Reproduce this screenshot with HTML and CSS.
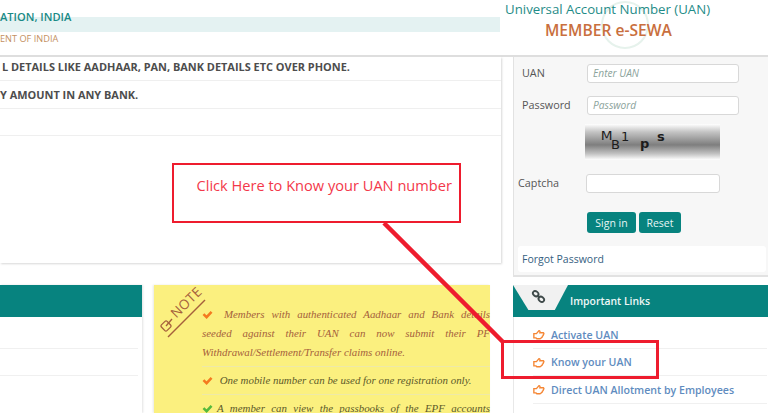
FILE: index.html
```html
<!DOCTYPE html>
<html lang="en">
<head>
<meta charset="utf-8">
<title>UAN Member e-Sewa</title>
<link rel="stylesheet" href="styles.css">
</head>
<body>
<div class="page">
  <header class="top">
    <div class="org">
      <div class="org-name"><span>ATION, INDIA</span></div>
      <div class="org-sub">ENT OF INDIA</div>
    </div>
    <div class="brand">
      <svg class="ring" viewBox="0 0 50 50" width="50" height="50" aria-hidden="true"><circle cx="25" cy="25" r="23" fill="none" stroke="#e6f2ec" stroke-width="2"/></svg>
      <div class="brand-a">Universal Account Number (UAN)</div>
      <div class="brand-b">MEMBER e-SEWA</div>
    </div>
  </header>

  <main class="upper">
    <section class="alerts">
      <div class="alert a1">L DETAILS LIKE AADHAAR, PAN, BANK DETAILS ETC OVER PHONE.</div>
      <div class="alert a2">Y AMOUNT IN ANY BANK.</div>
      <div class="alert a3"></div>
    </section>

    <aside class="login">
      <div class="field f-uan">
        <label class="lbl">UAN</label>
        <div class="inp ph">Enter UAN</div>
      </div>
      <div class="field f-pass">
        <label class="lbl">Password</label>
        <div class="inp ph">Password</div>
      </div>
      <div class="captcha"><span class="c1">M</span><span class="c2">B</span><span class="c3">1</span><span class="c4">p</span><span class="c5">s</span></div>
      <div class="field f-cap">
        <label class="lbl lbl-cap">Captcha</label>
        <div class="inp inp-cap"></div>
      </div>
      <div class="btns">
        <div class="btn b-sign">Sign in</div>
        <div class="btn b-reset">Reset</div>
      </div>
      <div class="forgot">Forgot Password</div>
    </aside>
  </main>

  <div class="lower">
    <section class="col-left">
      <div class="teal-head"></div>
      <div class="plain-row"></div>
      <div class="plain-row"></div>
    </section>

    <section class="note">
      <div class="note-tag">
        <svg class="note-svg" viewBox="0 0 54 54" width="54" height="54" aria-hidden="true">
          <path d="M14 52 L51 15" stroke="#a5603c" stroke-width="1.4" fill="none"/>
          <g fill="none" stroke="#a5603c" stroke-width="1.3">
            <rect x="-4" y="-4" width="8" height="8" rx="1.5" transform="translate(12 41) rotate(-44)"/>
            <path d="M12 41 L18 34"/>
          </g>
        </svg>
        <span class="note-word">NOTE</span>
      </div>
      <div class="note-body">
        <p class="n1"><svg class="chk" viewBox="0 0 12 10" width="11" height="9" aria-hidden="true"><path d="M1.5 4.5 L5 8 L10.5 2" fill="none" stroke="#f47a20" stroke-width="2.8"/></svg> Members with authenticated Aadhaar and Bank details seeded against their UAN can now submit their PF Withdrawal/Settlement/Transfer claims online.</p>
        <p class="n2"><svg class="chk" viewBox="0 0 12 10" width="11" height="9" aria-hidden="true"><path d="M1.5 4.5 L5 8 L10.5 2" fill="none" stroke="#f47a20" stroke-width="2.8"/></svg> One mobile number can be used for one registration only.</p>
        <p class="n3"><svg class="chk" viewBox="0 0 12 10" width="11" height="9" aria-hidden="true"><path d="M1.5 4.5 L5 8 L10.5 2" fill="none" stroke="#55b93c" stroke-width="2.8"/></svg>A member can view the passbooks of the EPF accounts</p>
      </div>
    </section>

    <section class="links">
      <div class="links-head">
        <div class="links-tab">
          <svg viewBox="0 0 16 16" width="15" height="15" aria-hidden="true">
            <g fill="none" stroke="#3f4a4a" stroke-width="2">
              <ellipse cx="5" cy="5" rx="3.2" ry="2.5" transform="rotate(40 5 5)"/>
              <ellipse cx="11" cy="11" rx="3.2" ry="2.5" transform="rotate(40 11 11)"/>
              <path d="M6.5 6.5 L9.5 9.5"/>
            </g>
          </svg>
        </div>
        <span class="links-title">Important Links</span>
      </div>
      <ul class="link-list">
        <li><svg class="hand" viewBox="0 0 14 12" width="12" height="11" aria-hidden="true"><path d="M1 5 H4 L7 1.5 Q8.6 1.5 8 4 H12.2 Q13.4 5 12 6.2 Q12.4 7.6 11 8 Q11 9.6 9.6 9.8 Q9.4 11 8 11 H4.5 L3.5 10 H1 Z" fill="none" stroke="#f58634" stroke-width="1.6"/></svg>Activate UAN</li>
        <li><svg class="hand" viewBox="0 0 14 12" width="12" height="11" aria-hidden="true"><path d="M1 5 H4 L7 1.5 Q8.6 1.5 8 4 H12.2 Q13.4 5 12 6.2 Q12.4 7.6 11 8 Q11 9.6 9.6 9.8 Q9.4 11 8 11 H4.5 L3.5 10 H1 Z" fill="none" stroke="#f58634" stroke-width="1.6"/></svg>Know your UAN</li>
        <li><svg class="hand" viewBox="0 0 14 12" width="12" height="11" aria-hidden="true"><path d="M1 5 H4 L7 1.5 Q8.6 1.5 8 4 H12.2 Q13.4 5 12 6.2 Q12.4 7.6 11 8 Q11 9.6 9.6 9.8 Q9.4 11 8 11 H4.5 L3.5 10 H1 Z" fill="none" stroke="#f58634" stroke-width="1.6"/></svg>Direct UAN Allotment by Employees</li>
      </ul>
    </section>
  </div>

  <svg class="arrow" viewBox="0 0 768 413" width="768" height="413" aria-hidden="true">
    <path d="M384 223 L503 342" stroke="#ee1c2e" stroke-width="4.5" fill="none"/>
  </svg>
  <div class="callout">Click Here to Know your UAN number</div>
  <div class="highlight"></div>
</div>
</body>
</html>
```
FILE: styles.css
```css
* { box-sizing: border-box; }
html, body { margin: 0; padding: 0; background: #fff; }
.page {
  position: relative;
  width: 768px;
  height: 413px;
  overflow: hidden;
  background: #fff;
  font-family: "Open Sans", "Noto Sans", sans-serif;
  color: #444;
}

/* header */
.top {
  display: flex;
  height: 57px;
  border-bottom: 2px solid #dedede;
}
.org { width: 500px; padding-top: 17px; }
.org-name {
  height: 15px;
  background: #e4f2f2;
  white-space: nowrap;
  font-size: 11.1px;
  font-weight: 600;
  line-height: 1;
  color: #1a8a86;
}
.org-name span { position: relative; top: -6px; }
.org-sub {
  margin-top: -1px;
  white-space: nowrap;
  font-size: 9.2px;
  line-height: 16px;
  color: #c4905f;
}
.brand { position: relative; flex: 1; padding: 0 0 0 5px; }
.ring { position: absolute; left: 100px; top: 0; }
.brand-a {
  position: relative;
  font-size: 13.25px;
  font-weight: 500;
  line-height: 18px;
  color: #1f8c88;
  white-space: nowrap;
}
.brand-b {
  position: relative;
  margin: 1px 0 0 40px;
  font-size: 15.6px;
  line-height: 22px;
  font-weight: 600;
  color: #c96f3e;
  white-space: nowrap;
}

/* upper */
.upper { display: flex; gap: 12px; height: 220px; }
.alerts {
  width: 501px;
  height: 206px;
  background: #fff;
  box-shadow: 1px 1px 2px #d8d8d8;
}
.alert {
  white-space: nowrap;
  font-size: 10.95px;
  font-weight: 700;
  color: #4d4d4d;
  border-bottom: 1px solid #efefef;
}
.a1 { height: 24px; line-height: 19px; padding-left: 2px; }
.a2 { height: 28px; line-height: 27px; }
.a3 { height: 27px; }

.login {
  width: 255px;
  background: #f7f7f7;
  border-left: 1px solid #e2e2e2;
  border-bottom: 2px solid #e2e2e2;
  padding: 7px 3px 0 4px;
}
.field { display: flex; align-items: center; height: 19px; }
.f-pass { margin-top: 13px; }
.f-cap { margin-top: 14px; }
.lbl { width: 69px; padding: 0 0 2px 4px; font-size: 10.8px; color: #555; }
.lbl-cap { padding-left: 0; width: 68px; }
.inp {
  width: 152px;
  height: 19px;
  background: #fff;
  border: 1px solid #d8d8d8;
  border-radius: 3px;
  padding-left: 5px;
  font-size: 10.2px;
  line-height: 17px;
}
.inp-cap { width: 134px; }
.ph { font-style: italic; color: #8ba39b; }
.captcha {
  position: relative;
  width: 135px;
  height: 36px;
  margin: 9px 0 0 67px;
  background: linear-gradient(#fff 0%, #c4c4c4 22%, #7e7e7e 58%, #c0c0c0 82%, #fff 100%);
  font-family: "DejaVu Sans", sans-serif;
  color: #1c1c1c;
  line-height: 1;
}
.captcha span { position: absolute; font-size: 13px; }
.c1 { left: 16px; top: 5px; transform: scaleX(1.05); }
.c2 { left: 26px; top: 14px; }
.c3 { left: 36px; top: 6px; font-size: 14px; }
.c4 { left: 55px; top: 13px; font-weight: 700; }
.c5 { left: 72px; top: 6px; font-weight: 700; }
.btns { display: flex; gap: 3px; margin: 19px 0 0 69px; }
.btn {
  height: 21px;
  background: #07837f;
  border-radius: 3px;
  color: #e6f5f4;
  font-size: 10.5px;
  line-height: 23px;
  text-align: center;
}
.b-sign { width: 49px; }
.b-reset { width: 42px; }
.forgot {
  height: 26px;
  margin: 13px -1px 0 0;
  background: #fff;
  border-radius: 3px;
  padding-left: 4px;
  font-size: 10.5px;
  line-height: 27px;
  color: #35607f;
}

/* lower */
.lower { display: flex; margin-top: 8px; }
.col-left {
  width: 142px;
  margin-right: 12px;
  height: 128px;
  box-shadow: 1px 0 2px #e2e2e2;
}
.teal-head { height: 32px; background: #07837f; }
.plain-row { height: 27px; margin-right: 4px; border-bottom: 1px solid #f0f0f0; }
.plain-row:nth-child(2) { height: 32px; }

.note {
  position: relative;
  width: 336px;
  height: 128px;
  margin-right: 23px;
  background: #fbf07f;
  box-shadow: -1px 0 2px #e8e8e0;
  padding: 20px 0 0 48px;
}
.note-tag { position: absolute; left: 0; top: 0; width: 54px; height: 54px; }
.note-svg { position: absolute; left: 0; top: 0; }
.note-word {
  position: absolute;
  left: 14px;
  top: 11px;
  transform: rotate(-44deg);
  font-size: 13.5px;
  font-weight: 500;
  letter-spacing: .4px;
  line-height: 1;
  color: #a5603c;
}
.note-body p {
  margin: 0;
  font-family: "Liberation Serif", serif;
  font-style: italic;
  font-size: 10.9px;
  line-height: 19px;
  text-align: justify;
}
.chk { margin-right: 4px; vertical-align: -1px; }
.n1 { color: #a5603c; padding-bottom: 4px; border-bottom: 1px solid #eee9a8; }
.n2 { color: #5c5a2a; padding: 4px 0; border-bottom: 1px solid #eee9a8; }
.n3 { color: #5c5a2a; padding-top: 4px; text-align-last: justify; }

.links { width: 255px; height: 128px; border-left: 1px solid #e8e8e8; }
.links-head {
  display: flex;
  align-items: center;
  height: 32px;
  margin-left: -1px;
  background: #07837f;
}
.links-tab {
  display: flex;
  align-items: center;
  justify-content: center;
  width: 55px;
  height: 25px;
  padding: 0 4px 2px 0;
  background: #f1f1f1;
  clip-path: polygon(0 0, 100% 0, 76% 100%, 28% 100%);
  align-self: flex-start;
}
.links-title {
  margin-left: 2px;
  color: #eef8f7;
  font-size: 10.4px;
  font-weight: 600;
}
.link-list { list-style: none; margin: 0; padding: 4px 0 0 19px; }
.link-list li {
  display: flex;
  align-items: center;
  height: 28px;
  margin-right: 1px;
  border-bottom: 1px solid #f0f0f0;
  font-size: 10.6px;
  font-weight: 600;
  color: #5f8cc0;
  white-space: nowrap;
}
.link-list li:nth-child(2) { height: 27px; }
.hand { margin-right: 6px; flex: none; }

/* annotations over the page */
.arrow { position: absolute; left: 0; top: 0; pointer-events: none; }
.callout {
  position: absolute;
  left: 172px;
  top: 163px;
  width: 289px;
  height: 60px;
  background: #fff;
  border: 2.5px solid #ee1c2e;
  padding: 8px 0 0 22.5px;
  font-size: 14.6px;
  line-height: 24px;
  color: #f3384a;
  white-space: nowrap;
}
.highlight {
  position: absolute;
  left: 501px;
  top: 340px;
  width: 158px;
  height: 39px;
  border: 3.5px solid #ee1c2e;
}
```
